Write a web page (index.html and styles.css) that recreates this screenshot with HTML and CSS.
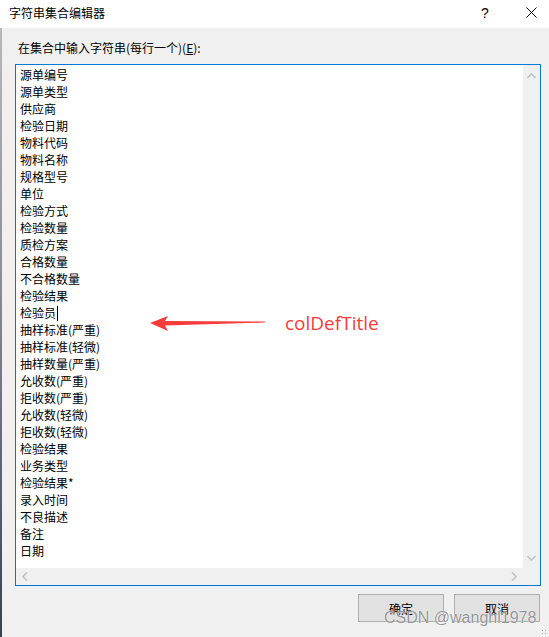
FILE: index.html
```html
<!DOCTYPE html>
<html lang="zh-CN">
<head>
<meta charset="utf-8">
<title>字符串集合编辑器</title>
<link rel="stylesheet" href="styles.css">
</head>
<body>
<div class="window">
  <div class="titlebar">
    <span class="title">字符串集合编辑器</span>
    <span class="help">?</span>
    <span class="close">
      <svg width="11" height="11" viewBox="0 0 11 11"><path d="M0.5 0.5 L10.5 10.5 M10.5 0.5 L0.5 10.5" stroke="#000" stroke-width="1" fill="none"/></svg>
    </span>
  </div>
  <div class="main">
    <div class="label">在集合中输入字符串(每行一个)(<u>E</u>):</div>
    <div class="editor">
      <div class="lines">
        <div>源单编号</div>
        <div>源单类型</div>
        <div>供应商</div>
        <div>检验日期</div>
        <div>物料代码</div>
        <div>物料名称</div>
        <div>规格型号</div>
        <div>单位</div>
        <div>检验方式</div>
        <div>检验数量</div>
        <div>质检方案</div>
        <div>合格数量</div>
        <div>不合格数量</div>
        <div>检验结果</div>
        <div>检验员<span class="caret"></span></div>
        <div>抽样标准(严重)</div>
        <div>抽样标准(轻微)</div>
        <div>抽样数量(严重)</div>
        <div>允收数(严重)</div>
        <div>拒收数(严重)</div>
        <div>允收数(轻微)</div>
        <div>拒收数(轻微)</div>
        <div>检验结果</div>
        <div>业务类型</div>
        <div>检验结果*</div>
        <div>录入时间</div>
        <div>不良描述</div>
        <div>备注</div>
        <div>日期</div>
      </div>
      <div class="vscroll">
        <svg width="9" height="6" viewBox="0 0 9 6"><path d="M0.5 5 L4.5 1 L8.5 5" stroke="#c2c2c2" stroke-width="1.6" fill="none"/></svg>
        <svg width="9" height="6" viewBox="0 0 9 6"><path d="M0.5 1 L4.5 5 L8.5 1" stroke="#c2c2c2" stroke-width="1.6" fill="none"/></svg>
      </div>
      <div class="hscroll">
        <svg width="6" height="9" viewBox="0 0 6 9"><path d="M5 0.5 L1 4.5 L5 8.5" stroke="#c2c2c2" stroke-width="1.6" fill="none"/></svg>
        <svg width="6" height="9" viewBox="0 0 6 9"><path d="M1 0.5 L5 4.5 L1 8.5" stroke="#c2c2c2" stroke-width="1.6" fill="none"/></svg>
      </div>
      <div class="corner"></div>
    </div>
    <div class="buttons">
      <button class="btn">确定</button>
      <button class="btn">取消</button>
    </div>
  </div>
  <svg class="arrow" width="120" height="24" viewBox="0 0 120 24">
    <polygon points="2,11 20,4 17,9 117,9.6 117,10.6 17,13.5 20,19" fill="#f53b3b"/>
  </svg>
  <div class="note">colDefTitle</div>
  <div class="watermark">CSDN @wanghl1978</div>
  <div class="grip"></div>
</div>
</body>
</html>
```
FILE: styles.css
```css
html, body {
  margin: 0;
  padding: 0;
}
body {
  width: 549px;
  height: 637px;
  overflow: hidden;
  font-family: "Noto Sans CJK SC", "Liberation Sans", sans-serif;
  font-size: 12px;
  color: #000;
}
.window {
  position: relative;
  width: 549px;
  height: 637px;
  background: #f0f0f0;
  display: flex;
  flex-direction: column;
}
.titlebar {
  height: 28px;
  background: #fff;
  display: flex;
  align-items: center;
  flex: none;
}
.title {
  margin-left: 9px;
  flex: 1;
  line-height: 16px;
  padding-bottom: 3px;
}
.help {
  font-family: "Liberation Sans", sans-serif;
  font-size: 14px;
  width: 16px;
  text-align: center;
  margin-right: 33px;
  padding-bottom: 3px;
}
.close {
  width: 11px;
  height: 11px;
  margin-right: 12px;
  margin-bottom: 3px;
  display: flex;
}
.main {
  flex: 1;
  border-left: 2px solid transparent;
  border-image: linear-gradient(#b8b8b8, #8a8f98 40%, #3a4050) 1;
  padding: 0 8px 0 13px;
  display: flex;
  flex-direction: column;
}
.label {
  margin-top: 11px;
  margin-left: 3px;
  line-height: 17px;
  height: 17px;
  margin-bottom: 8px;
}
.editor {
  height: 522px;
  box-sizing: border-box;
  border: 1px solid #0078d7;
  background: #fff;
  display: grid;
  grid-template-columns: 1fr 17px;
  grid-template-rows: 1fr 17px;
}
.lines {
  padding: 1px 0 0 4px;
  line-height: 17px;
  overflow: hidden;
}
.caret {
  display: inline-block;
  width: 1px;
  height: 15px;
  background: #000;
  vertical-align: -3px;
  margin-left: 1px;
}
.vscroll {
  background: #f0f0f0;
  display: flex;
  flex-direction: column;
  justify-content: space-between;
  align-items: center;
  padding: 8px 0 7px;
}
.hscroll {
  background: #f0f0f0;
  display: flex;
  justify-content: space-between;
  align-items: center;
  padding: 0 6px 0 6px;
}
.corner {
  background: #f0f0f0;
}
.buttons {
  margin-top: 8px;
  padding-right: 1px;
  display: flex;
  justify-content: flex-end;
  gap: 10px;
}
.btn {
  width: 86px;
  height: 28px;
  box-sizing: border-box;
  border: 1px solid #adadad;
  background: #e1e1e1;
  font-family: "Noto Sans CJK SC", "Liberation Sans", sans-serif;
  font-size: 12px;
  color: #000;
  padding: 0;
  margin: 0;
}
.arrow {
  position: absolute;
  left: 148px;
  top: 312px;
}
.note {
  position: absolute;
  left: 285px;
  top: 310px;
  font-family: "Open Sans", "Noto Sans", sans-serif;
  font-size: 19px;
  line-height: 26px;
  color: #f53b3b;
}
.watermark {
  position: absolute;
  left: 384px;
  top: 608px;
  font-family: "Liberation Sans", sans-serif;
  font-size: 16px;
  line-height: 20px;
  color: rgba(100, 100, 100, 0.7);
  text-shadow: 0 0 1px #fff, 0 0 1px #fff;
}
.grip {
  position: absolute;
  right: 2px;
  bottom: 2px;
  width: 6px;
  height: 6px;
  background: radial-gradient(circle, #a0a0a0 0.8px, transparent 1px) 0 0 / 3px 3px;
}
```
